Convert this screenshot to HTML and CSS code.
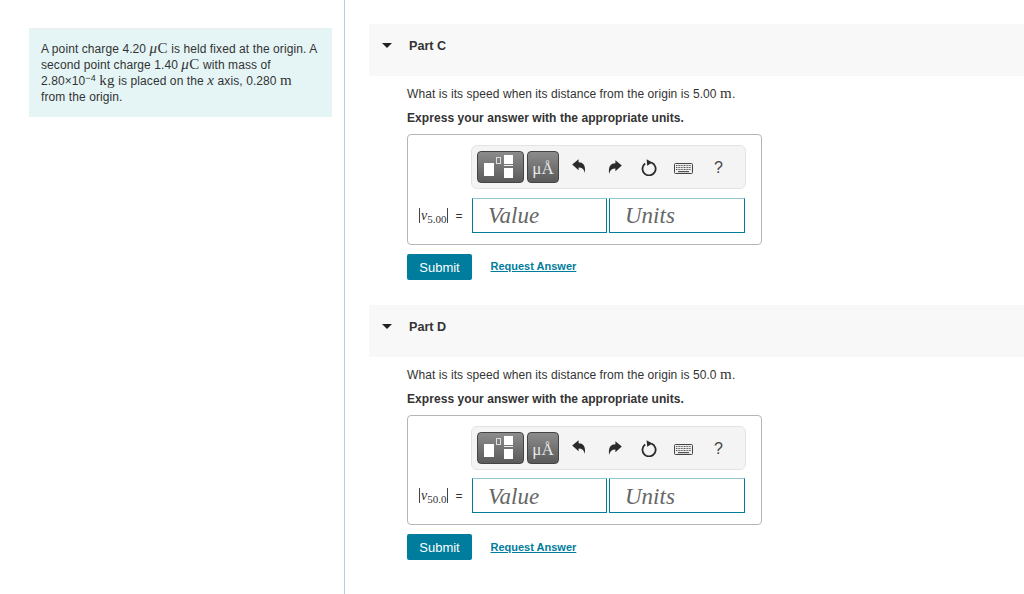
FILE: index.html
```html
<!DOCTYPE html>
<html lang="en">
<head>
<meta charset="utf-8">
<title>Part C and Part D</title>
<link rel="stylesheet" href="styles.css">
</head>
<body>
<svg class="defs" width="0" height="0" aria-hidden="true">
  <symbol id="undo" viewBox="0 0 14 14"><path d="M0.2 5.6 6.6 0.2V3.2C11.2 3.2 14 6.4 12.8 14C12.2 10.4 10 8.6 6.6 8.6V11.2Z"/></symbol>
  <symbol id="redo" viewBox="0 0 14 14"><path d="M13.8 5.6 7.4 0.2V3.2C2.8 3.2 0 6.4 1.2 14C1.8 10.4 4 8.6 7.4 8.6V11.2Z"/></symbol>
  <symbol id="reset" viewBox="0 0 17 17"><path d="M10.4 3.6A6.6 6.6 0 1 1 4.2 4.4" fill="none" stroke="#2b2b2b" stroke-width="1.8"/><path d="M5.6 0.2 11.4 3.4 6.2 6.8Z" fill="#2b2b2b"/></symbol>
  <symbol id="keyboard" viewBox="0 0 19 11"><rect x="0.5" y="0.5" width="18" height="10" rx="1" fill="#eee" stroke="#444"/><path d="M2 2.5H17M2 4.5H17M2 6.5H17" stroke="#555" stroke-width="1" stroke-dasharray="1 .6"/><path d="M4 8.6H15" stroke="#555" stroke-width="1.2"/></symbol>
</svg>
<div class="page">
  <aside class="side">
    <div class="intro">
      <p>A point charge 4.20 <span class="math"><i>μ</i>C</span> is held fixed at the origin. A<br>second point charge 1.40 <span class="math"><i>μ</i>C</span> with mass of<br>2.80×10<sup>−4</sup> <span class="math">kg</span> is placed on the <span class="math"><i>x</i></span> axis, 0.280 <span class="math">m</span><br>from the origin.</p>
    </div>
  </aside>
  <main class="parts">
    <section class="part">
      <header class="part-head"><span class="caret"></span><h2>Part C</h2></header>
      <div class="part-body">
        <p class="question">What is its speed when its distance from the origin is 5.00 <span class="math">m</span>.</p>
        <p class="instruction">Express your answer with the appropriate units.</p>
        <div class="answer">
          <div class="toolbar">
            <button class="tool tool-templates" aria-label="Templates"><span class="big-box"></span><span class="small-box"></span><span class="fraction"><b></b><b></b></span></button>
            <button class="tool tool-units">μÅ</button>
            <svg class="ico ico-undo"><use href="#undo"/></svg>
            <svg class="ico ico-redo"><use href="#redo"/></svg>
            <svg class="ico ico-reset"><use href="#reset"/></svg>
            <svg class="ico ico-keyboard"><use href="#keyboard"/></svg>
            <span class="help">?</span>
          </div>
          <div class="entry">
            <span class="label"><span class="bar"></span><i>v</i><sub>5.00</sub><span class="bar"></span><span class="eq">=</span></span>
            <div class="field">Value</div>
            <div class="field">Units</div>
          </div>
        </div>
        <div class="actions"><button class="submit">Submit</button><a class="request" href="#">Request Answer</a></div>
      </div>
    </section>
    <section class="part">
      <header class="part-head"><span class="caret"></span><h2>Part D</h2></header>
      <div class="part-body">
        <p class="question">What is its speed when its distance from the origin is 50.0 <span class="math">m</span>.</p>
        <p class="instruction">Express your answer with the appropriate units.</p>
        <div class="answer">
          <div class="toolbar">
            <button class="tool tool-templates" aria-label="Templates"><span class="big-box"></span><span class="small-box"></span><span class="fraction"><b></b><b></b></span></button>
            <button class="tool tool-units">μÅ</button>
            <svg class="ico ico-undo"><use href="#undo"/></svg>
            <svg class="ico ico-redo"><use href="#redo"/></svg>
            <svg class="ico ico-reset"><use href="#reset"/></svg>
            <svg class="ico ico-keyboard"><use href="#keyboard"/></svg>
            <span class="help">?</span>
          </div>
          <div class="entry">
            <span class="label"><span class="bar"></span><i>v</i><sub>50.0</sub><span class="bar"></span><span class="eq">=</span></span>
            <div class="field">Value</div>
            <div class="field">Units</div>
          </div>
        </div>
        <div class="actions"><button class="submit">Submit</button><a class="request" href="#">Request Answer</a></div>
      </div>
    </section>
  </main>
</div>
</body>
</html>
```
FILE: styles.css
```css
* { box-sizing: border-box; }
html, body { margin: 0; height: 594px; overflow: hidden; background: #fff; }
body { font-family: "Liberation Sans", Arial, sans-serif; font-size: 12px; color: #333; }
.defs { position: absolute; }
.page { display: flex; height: 594px; }
.side { width: 345px; flex: none; border-right: 1px solid #b9cde0; padding: 28px 12px 0 29px; }
.intro { width: 303px; height: 89px; background: #e5f5f6; border-top: 1px solid #e9eeee; padding: 12px 0 0 12px; }
.intro p { margin: 0; font-size: 12px; line-height: 16px; color: #333; letter-spacing: 0.09px; }
.intro sup { font-size: 9px; line-height: 0; vertical-align: 4px; }
.math { font-family: "Liberation Serif", serif; font-size: 15px; line-height: 0; letter-spacing: 0.3px; }
.parts { flex: 1; padding: 24px 0 0 24px; min-width: 0; }
.part { height: 281px; }
.part-head { height: 52px; background: #f8f8f8; display: flex; align-items: flex-start; padding: 15px 0 0 13px; }
.caret { width: 0; height: 0; margin-top: 4px; border-left: 5px solid transparent; border-right: 5px solid transparent; border-top: 5px solid #222; }
.part-head h2 { margin: 0 0 0 17px; font-size: 12.6px; line-height: 14px; font-weight: bold; color: #333; }
.part-body { padding: 9px 0 0 38px; width: 393px; box-sizing: content-box; }
.question { margin: 0; font-size: 12px; line-height: 18px; color: #333; letter-spacing: 0.07px; white-space: nowrap; }
.instruction { margin: 7px 0 0; font-size: 12px; line-height: 16px; font-weight: bold; color: #333; letter-spacing: 0.06px; }
.answer { margin-top: 8px; width: 355px; height: 111px; border: 1px solid #b5b5b5; border-radius: 4px; padding: 10px 0 0 10px; }
.part + .part .answer { height: 110px; }
.part + .part .entry { margin-top: 8px; }
.part + .part .field { line-height: 36px; }
.part + .part .request { margin-bottom: 0; }
.toolbar { position: relative; margin-left: 53px; width: 275px; height: 44px; background: #f4f4f4; border: 1px solid #e3e3e3; border-radius: 6px; display: flex; align-items: center; padding-left: 5px; }
.tool { border: 1px solid #444; border-radius: 4px; padding: 0; height: 32px; background: linear-gradient(#8c8c8c, #5a5a5a); color: #e8e8e8; position: relative; }
.tool-templates { width: 47px; }
.tool-units { width: 32px; margin-left: 3px; padding-top: 4px; font-family: "Liberation Serif", serif; font-size: 17px; }
.big-box { position: absolute; left: 6px; top: 11px; width: 10px; height: 13px; background: #fff; }
.small-box { position: absolute; left: 18px; top: 5px; width: 5px; height: 7px; border: 1px solid #ddd; }
.fraction { position: absolute; left: 26px; top: 3px; width: 9px; height: 23px; display: flex; flex-direction: column; justify-content: space-between; }
.fraction::before { content: ""; position: absolute; left: 0; top: 10px; width: 9px; height: 1px; background: #eee; }
.fraction b { display: block; height: 9px; background: #fff; }
.fraction b + b { height: 10px; }
.ico { position: absolute; fill: #2b2b2b; }
.ico-undo { left: 100px; top: 13px; width: 14px; height: 14px; }
.ico-redo { left: 136px; top: 14px; width: 14px; height: 14px; }
.ico-reset { left: 169px; top: 13px; width: 17px; height: 17px; }
.ico-keyboard { left: 202px; top: 17px; width: 19px; height: 11px; }
.help { position: absolute; left: 242px; top: 13px; font-size: 16px; line-height: 18px; color: #444; }
.entry { display: flex; align-items: stretch; margin-top: 9px; height: 35px; }
.label { width: 54px; flex: none; display: flex; align-items: center; font-family: "Liberation Serif", serif; font-size: 14px; color: #333; white-space: pre; }
.label sub { font-size: 11px; line-height: 0; position: relative; top: 3px; vertical-align: baseline; }
.bar { display: inline-block; width: 1px; height: 15px; background: #444; margin: 0 1px; }
.eq { font-family: "Liberation Sans", sans-serif; font-size: 12px; margin-left: 6px; }
.field { width: 135px; height: 35px; border: 1px solid #007c9c; border-top-color: #8ec6d4; margin-right: 2px; padding-left: 15px; font-family: "Liberation Serif", serif; font-style: italic; font-size: 23px; line-height: 34px; color: #666; }
.field + .field { width: 136px; margin-right: 0; }
.actions { display: flex; align-items: center; margin-top: 9px; height: 26px; }
.submit { width: 65px; height: 26px; border: 0; border-radius: 2px; background: #007c9c; color: #fff; font: 13px/28px "Liberation Sans", sans-serif; padding: 0; }
.request { margin: 0 0 2px 18.5px; color: #007c9c; font-size: 11px; font-weight: bold; }
```
